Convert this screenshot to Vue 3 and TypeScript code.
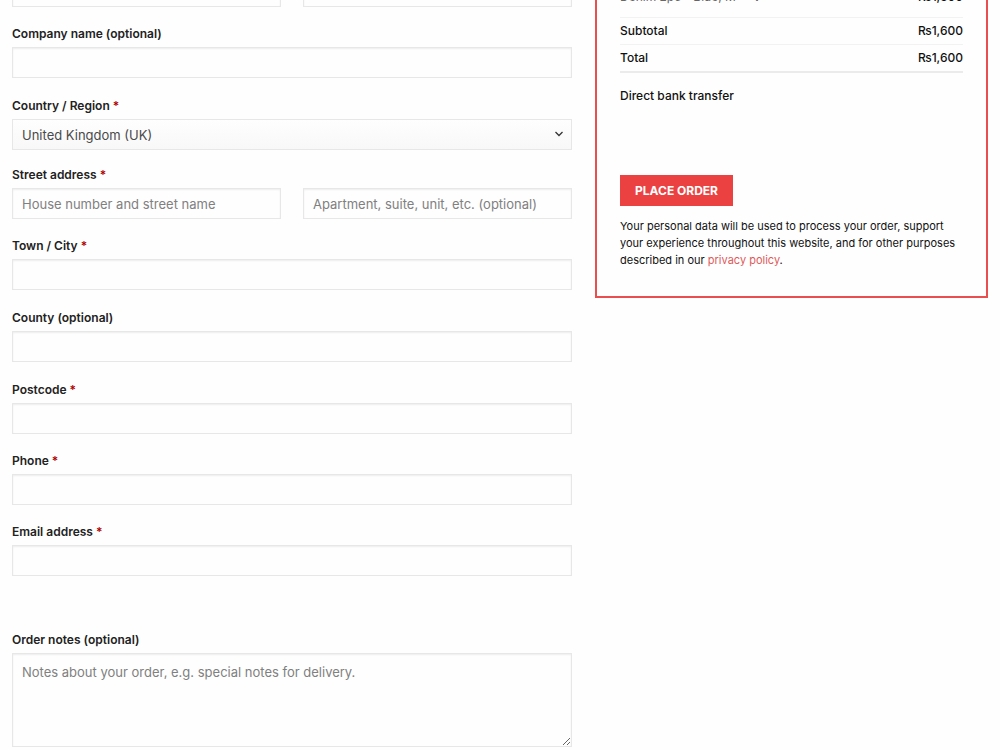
<script setup lang="ts">
import { reactive } from 'vue'

interface Field {
  id: string
  label: string
  type: string
  required?: boolean
  loose?: boolean
}

const fields: Field[] = [
  { id: 'city', label: 'Town / City', type: 'text', required: true, loose: true },
  { id: 'county', label: 'County (optional)', type: 'text', loose: true },
  { id: 'postcode', label: 'Postcode', type: 'text', required: true },
  { id: 'phone', label: 'Phone', type: 'tel', required: true },
  { id: 'email', label: 'Email address', type: 'email', required: true },
]

const form = reactive<Record<string, string>>({
  first: '',
  last: '',
  company: '',
  country: 'GB',
  street: '',
  unit: '',
  city: '',
  county: '',
  postcode: '',
  phone: '',
  email: '',
  notes: '',
})
</script>

<template>
  <form class="checkout" @submit.prevent>
    <div class="billing">
      <div class="pair names">
        <input v-model="form.first" class="control" type="text" aria-label="First name" />
        <input v-model="form.last" class="control" type="text" aria-label="Last name" />
      </div>

      <div class="field loose">
        <label for="company">Company name (optional)</label>
        <input id="company" v-model="form.company" class="control" type="text" />
      </div>

      <div class="field tight">
        <label for="country">Country / Region <span class="required">*</span></label>
        <div class="select-wrap">
          <select id="country" v-model="form.country" class="control">
            <option value="GB">United Kingdom (UK)</option>
          </select>
          <svg class="chevron" viewBox="0 0 10 6" aria-hidden="true">
            <path d="M1.5 1 L5 4.5 L8.5 1" />
          </svg>
        </div>
      </div>

      <div class="field">
        <label for="street">Street address <span class="required">*</span></label>
        <div class="pair">
          <input id="street" v-model="form.street" class="control" type="text" placeholder="House number and street name" />
          <input v-model="form.unit" class="control" type="text" placeholder="Apartment, suite, unit, etc. (optional)" aria-label="Apartment, suite, unit, etc. (optional)" />
        </div>
      </div>

      <div v-for="field in fields" :key="field.id" class="field" :class="{ loose: field.loose }">
        <label :for="field.id">{{ field.label }} <span v-if="field.required" class="required">*</span></label>
        <input :id="field.id" v-model="form[field.id]" class="control" :type="field.type" />
      </div>

      <div class="field notes">
        <label for="notes">Order notes (optional)</label>
        <textarea id="notes" v-model="form.notes" class="control" placeholder="Notes about your order, e.g. special notes for delivery."></textarea>
      </div>
    </div>

    <aside class="order">
      <table>
        <tbody>
          <tr class="item">
            <td>Denim 2pc - Blue, M &nbsp;<strong>× 1</strong></td>
            <td class="amount">₨1,600</td>
          </tr>
        </tbody>
        <tfoot>
          <tr>
            <th scope="row">Subtotal</th>
            <td class="amount">₨1,600</td>
          </tr>
          <tr class="total">
            <th scope="row">Total</th>
            <td class="amount">₨1,600</td>
          </tr>
        </tfoot>
      </table>
      <p class="method">Direct bank transfer</p>
      <button type="submit">PLACE ORDER</button>
      <p class="privacy">
        Your personal data will be used to process your order, support your experience throughout this website, and for other purposes described in our <a href="#privacy">privacy policy</a>.
      </p>
    </aside>
  </form>
</template>

<style>
body {
  margin: 0;
  background: #fefefe;
  overflow: hidden;
}
</style>

<style scoped>
.checkout,
.checkout * {
  box-sizing: border-box;
}

.checkout {
  display: grid;
  grid-template-columns: minmax(0, 560fr) minmax(0, 393fr);
  column-gap: 23px;
  align-items: start;
  margin-top: -24px;
  padding: 0 12px;
  font-family: Inter, "Open Sans", sans-serif;
  font-size: 12px;
  color: #222;
}

.pair {
  display: grid;
  grid-template-columns: 1fr 1fr;
  column-gap: 22px;
}

.names {
  margin-bottom: 20px;
}

.field {
  margin-bottom: 20px;
}

.field.tight {
  margin-bottom: 18px;
}

.field.loose {
  margin-bottom: 21px;
}

.field.notes {
  margin: 57px 0 0;
}

label {
  display: block;
  height: 20px;
  line-height: 14px;
  font-size: 12px;
  font-weight: 600;
}

.required {
  color: #b20000;
}

.control {
  display: block;
  width: 100%;
  height: 31px;
  margin: 0;
  padding: 0 9px;
  border: 1px solid #e7e7e7;
  border-radius: 0;
  background: #fefefe;
  box-shadow: inset 0 1px 2px rgba(0, 0, 0, 0.07);
  font-family: inherit;
  font-size: 13px;
  color: #4a4a4a;
  outline: none;
}

.control::placeholder {
  color: #808080;
  opacity: 1;
}

.select-wrap {
  position: relative;
}

select.control {
  appearance: none;
  background: linear-gradient(#fefefe, #f8f8f8);
  box-shadow: none;
}

.chevron {
  position: absolute;
  top: 12px;
  right: 8px;
  width: 10px;
  height: 6px;
  fill: none;
  stroke: #333;
  stroke-width: 1.3;
  pointer-events: none;
}

textarea.control {
  height: 94px;
  padding: 8px 9px;
  line-height: 20px;
  resize: vertical;
}

.order {
  height: 322px;
  padding: 8px 23px 0;
  border: 2px solid #e94f4f;
  border-top: 0;
  color: #111;
}

table {
  width: 100%;
  border-collapse: collapse;
}

th,
td {
  height: 27px;
  padding: 0;
  border-bottom: 1px solid #f2f2f2;
  line-height: 16px;
  font-size: 12px;
  text-align: left;
  vertical-align: middle;
}

th {
  font-weight: 500;
}

.item td {
  height: 33px;
  padding-bottom: 6px;
  color: #666;
}

td.amount,
.item td.amount {
  font-weight: 500;
  text-align: right;
  color: #111;
}

.total th,
.total td {
  height: 28px;
  border-bottom: 2px solid #ebebeb;
}

.method {
  margin: 15px 0 71px;
  line-height: 16px;
  font-size: 12px;
  font-weight: 500;
}

button {
  display: block;
  height: 31px;
  margin: 0;
  padding: 0 15px;
  border: 0;
  background: #ec4141;
  font-family: inherit;
  font-size: 12px;
  font-weight: 700;
  color: #fff;
}

.privacy {
  margin: 12px 0 0;
  line-height: 17px;
  font-size: 11px;
}

a {
  color: #e05a5a;
  text-decoration: none;
}
</style>
